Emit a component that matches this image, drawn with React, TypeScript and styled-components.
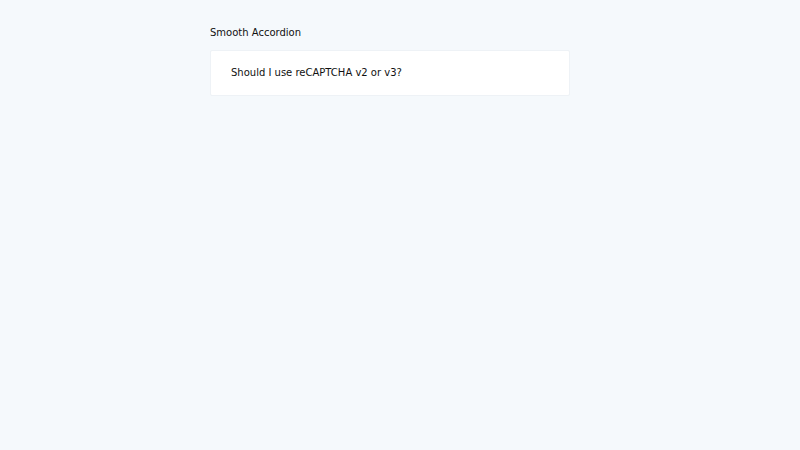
import React from "react";
import styled, { createGlobalStyle } from "styled-components";

const GlobalStyle = createGlobalStyle`
  html, body {
    margin: 0;
    padding: 0;
    background-color: #f5f9fc;
    font-family: "DejaVu Sans", sans-serif;
    color: #111;
  }
`;

const Page = styled.div`
  min-height: 100vh;
  display: flex;
  justify-content: center;
  padding: 26px 20px 0 0;
  box-sizing: border-box;
`;

const Wrapper = styled.div`
  width: 360px;
`;

const Title = styled.h1`
  font-size: 10px;
  font-weight: normal;
  margin: 0 0 10px 0;
  line-height: 14px;
`;

const Item = styled.div`
  background-color: #fff;
  border: 1px solid #eef2f6;
  border-radius: 2px;
`;

const Question = styled.button`
  display: block;
  width: 100%;
  text-align: left;
  background: none;
  border: none;
  padding: 15px 20px 15px 20px;
  font-family: inherit;
  font-size: 10px;
  line-height: 14px;
  color: #111;
  cursor: pointer;
`;

const App = () => {
  return (
    <>
      <GlobalStyle />
      <Page>
        <Wrapper>
          <Title>Smooth Accordion</Title>
          <Item>
            <Question>Should I use reCAPTCHA v2 or v3?</Question>
          </Item>
        </Wrapper>
      </Page>
    </>
  );
};

export default App;
